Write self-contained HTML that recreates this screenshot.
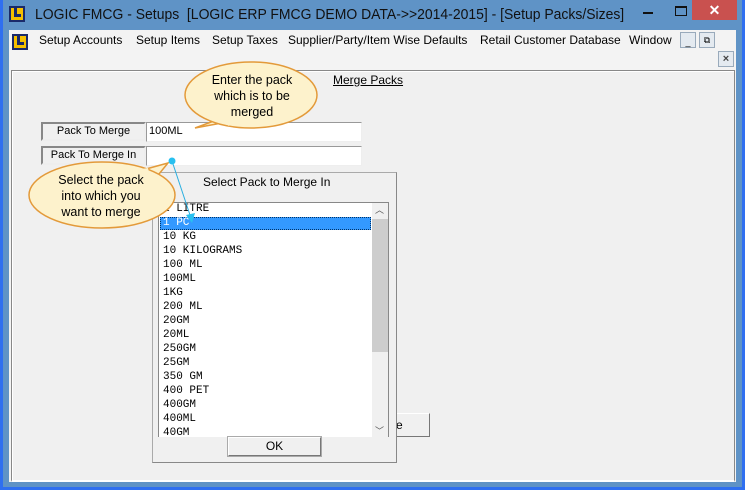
<!DOCTYPE html>
<html><head><style>
*{margin:0;padding:0;box-sizing:border-box}
body{width:745px;height:490px;overflow:hidden;background:#2f6ff0;font-family:"Liberation Sans",sans-serif;position:relative}
.a{position:absolute}
.frame{left:3px;top:0;width:739px;height:487px;background:#5f93c6}
.title{left:35px;top:6px;font-size:15px;color:#111;transform:scaleX(0.93);transform-origin:0 0;white-space:nowrap}
.menu{left:9px;top:30px;width:727px;height:452px;background:#f3f3f3}
.mi{top:33px;font-size:12px;color:#000;white-space:nowrap}
.panel{left:11px;top:70px;width:724px;height:412px;background:#f0f0f0;border:1px solid #888;border-bottom:2px solid #fff;box-shadow:inset 1px 1px 0 #fff}
.lab{background:#f0f0f0;border:2px solid #888;border-right-color:#eee;border-bottom-color:#eee;font-size:11px;text-align:center;line-height:15px}
.inp{background:#fff;border:1px solid #999;border-right-color:#eee;border-bottom-color:#eee;font-size:11px;line-height:17px;padding-left:2px}
.li{left:163px;font-family:"Liberation Mono",monospace;font-size:11px;height:14px;line-height:14px}
</style></head><body>
<div class="a frame"></div>
<div class="a" style="left:9px;top:6px;width:16px;height:16px;background:#1a2a6a"><div class="a" style="left:2px;top:2px;width:12px;height:12px;background:#f5c000"></div><div class="a" style="left:5px;top:2px;width:3px;height:9px;background:#1a2a6a"></div><div class="a" style="left:5px;top:8px;width:7px;height:3px;background:#1a2a6a"></div></div>
<div class="a title">LOGIC FMCG - Setups&nbsp; [LOGIC ERP FMCG DEMO DATA-&gt;&gt;2014-2015] - [Setup Packs/Sizes]</div>
<div class="a" style="left:643px;top:12px;width:10px;height:2px;background:#111"></div>
<div class="a" style="left:675px;top:6px;width:12px;height:10px;border:1px solid #111;border-top-width:2px"></div>
<div class="a" style="left:692px;top:0;width:45px;height:20px;background:#c9514f;color:#fff;text-align:center;font-size:14px;line-height:20px;font-weight:bold">✕</div>
<div class="a menu"></div>
<div class="a" style="left:12px;top:34px;width:16px;height:16px;background:#1a2a6a"><div class="a" style="left:2px;top:2px;width:12px;height:12px;background:#f5c000"></div><div class="a" style="left:5px;top:2px;width:3px;height:9px;background:#1a2a6a"></div><div class="a" style="left:5px;top:8px;width:7px;height:3px;background:#1a2a6a"></div></div>
<div class="a mi" style="left:39px">Setup Accounts</div>
<div class="a mi" style="left:136px">Setup Items</div>
<div class="a mi" style="left:212px">Setup Taxes</div>
<div class="a mi" style="left:288px">Supplier/Party/Item Wise Defaults</div>
<div class="a mi" style="left:480px">Retail Customer Database</div>
<div class="a mi" style="left:629px">Window</div>
<div class="a" style="left:680px;top:32px;width:16px;height:16px;border:1px solid #9ab;background:#e4eaf0;font-size:9px;text-align:center;line-height:18px">_</div>
<div class="a" style="left:699px;top:32px;width:16px;height:16px;border:1px solid #9ab;background:#e4eaf0;font-size:9px;text-align:center;line-height:14px">⧉</div>
<div class="a" style="left:718px;top:51px;width:16px;height:16px;border:1px solid #9ab;background:#e4eaf0;font-size:11px;text-align:center;line-height:14px;font-weight:bold;color:#444">×</div>
<div class="a panel"></div>
<div class="a" style="left:333px;top:73px;font-size:12px;text-decoration:underline">Merge Packs</div>
<div class="a lab" style="left:41px;top:122px;width:105px;height:19px">Pack To Merge</div>
<div class="a inp" style="left:146px;top:122px;width:216px;height:20px">100ML</div>
<div class="a lab" style="left:41px;top:146px;width:105px;height:19px">Pack To Merge In</div>
<div class="a inp" style="left:146px;top:146px;width:216px;height:20px"></div>
<div class="a" style="left:390px;top:413px;width:40px;height:24px;background:#f0f0f0;border:1px solid #777;border-top-color:#fff;border-left-color:#fff;font-size:12px;line-height:22px;padding-left:5px">e</div>
<div class="a" style="left:152px;top:172px;width:245px;height:291px;background:#f0f0f0;border:1px solid #aaa;border-right-color:#888;border-bottom-color:#888"></div>
<div class="a" style="left:203px;top:175px;font-size:12px">Select Pack to Merge In</div>
<div class="a" style="left:158px;top:202px;width:231px;height:235px;background:#fff;border:1px solid #888;border-bottom:none;overflow:hidden"></div>
<div class="a" style="left:160px;top:217px;width:211px;height:13px;background:#3399ff;border:1px dotted #036"></div>
<div class="a li" style="top:202px">1 LITRE</div>
<div class="a li" style="top:216px;color:#fff">1 PC</div>
<div class="a li" style="top:230px">10 KG</div>
<div class="a li" style="top:244px">10 KILOGRAMS</div>
<div class="a li" style="top:258px">100 ML</div>
<div class="a li" style="top:272px">100ML</div>
<div class="a li" style="top:286px">1KG</div>
<div class="a li" style="top:300px">200 ML</div>
<div class="a li" style="top:314px">20GM</div>
<div class="a li" style="top:328px">20ML</div>
<div class="a li" style="top:342px">250GM</div>
<div class="a li" style="top:356px">25GM</div>
<div class="a li" style="top:370px">350 GM</div>
<div class="a li" style="top:384px">400 PET</div>
<div class="a li" style="top:398px">400GM</div>
<div class="a li" style="top:412px">400ML</div>
<div class="a li" style="top:426px;height:10px;overflow:hidden">40GM</div>
<div class="a" style="left:372px;top:203px;width:16px;height:234px;background:#f0f0f0"></div>
<div class="a" style="left:372px;top:219px;width:16px;height:133px;background:#cdcdcd"></div>
<div class="a" style="left:375px;top:203px;font-size:9px;color:#555">︿</div>
<div class="a" style="left:375px;top:424px;font-size:9px;color:#555">﹀</div>
<div class="a" style="left:228px;top:437px;width:93px;height:19px;background:#f0f0f0;border:1px solid #777;border-top-color:#fff;border-left-color:#fff;box-shadow:0 0 0 1px #aaa;font-size:12px;text-align:center;line-height:17px">OK</div>
<svg class="a" style="left:0;top:0" width="745" height="490">
<path d="M222,118 L195,128 L238,120" fill="#fdf2cc" stroke="#e39a3a" stroke-width="1.5"/>
<ellipse cx="251" cy="95" rx="66" ry="33" fill="#fdf2cc" stroke="#e39a3a" stroke-width="1.5"/>
<path d="M135,172 L168,163 L150,185" fill="#fdf2cc" stroke="#e39a3a" stroke-width="1.5"/>
<ellipse cx="102" cy="195" rx="73" ry="33" fill="#fdf2cc" stroke="#e39a3a" stroke-width="1.5"/>
<path d="M215,116 L229,126 L236,115 Z M135,170 L152,186 L148,168 Z" fill="#fdf2cc"/>
<line x1="172" y1="161" x2="191" y2="218" stroke="#28aee0" stroke-width="1"/>
<circle cx="172" cy="161" r="3.5" fill="#28c0f0"/>
<path d="M186,215 L192,223 L195,213 Z" fill="#28c0f0"/>
</svg>
<div class="a" style="left:196px;top:72px;width:112px;text-align:center;font-size:12.5px;line-height:16px">Enter the pack which is to be merged</div>
<div class="a" style="left:52px;top:172px;width:98px;text-align:center;font-size:12.5px;line-height:16px">Select the pack into which you want to merge</div>
</body></html>
